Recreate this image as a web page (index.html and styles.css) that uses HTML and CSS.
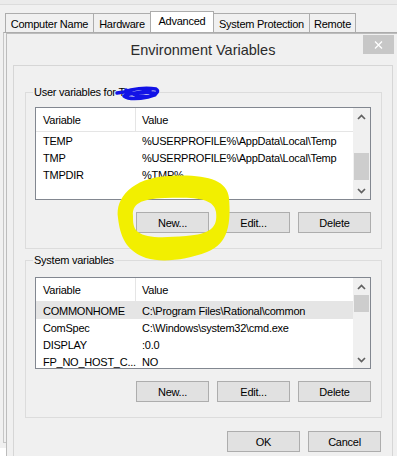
FILE: index.html
```html
<!DOCTYPE html>
<html lang="en">
<head>
    <meta charset="UTF-8">
    <meta name="viewport" content="width=device-width, initial-scale=1.0">
    <title>Environment Variables</title>
    <link rel="stylesheet" href="styles.css">
</head>
<body>

    <!-- System Properties window behind the dialog -->
    <div class="sysprops">
        <div class="caption-strip"></div>
        <div class="tabs">
            <div class="tab tab-name">Computer Name</div>
            <div class="tab tab-hardware">Hardware</div>
            <div class="tab tab-advanced active">Advanced</div>
            <div class="tab tab-protection">System Protection</div>
            <div class="tab tab-remote">Remote</div>
        </div>
        <div class="tab-panel"></div>
    </div>

    <div class="dialog">
        <div class="titlebar">
            <div class="title">Environment Variables</div>
            <div class="close">
                <svg width="9" height="8" viewBox="0 0 9 8">
                    <path d="M1 0.5 L8 7.5 M8 0.5 L1 7.5" stroke="#fff" stroke-width="1.3" fill="none"/>
                </svg>
            </div>
        </div>

        <div class="client">
            <fieldset class="group">
                <legend>User variables for <span class="who">T</span></legend>
                <div class="list">
                    <div class="list-body">
                        <div class="list-head"><span>Variable</span><span>Value</span></div>
                        <div class="row"><span>TEMP</span><span>%USERPROFILE%\AppData\Local\Temp</span></div>
                        <div class="row"><span>TMP</span><span>%USERPROFILE%\AppData\Local\Temp</span></div>
                        <div class="row"><span>TMPDIR</span><span>%TMP%</span></div>
                    </div>
                    <div class="scrollbar">
                        <div class="sb-btn">
                            <svg width="17" height="17" viewBox="0 0 17 17"><polyline points="5,11 8.5,7.5 12,11" fill="none" stroke="#606060" stroke-width="1.7"/></svg>
                        </div>
                        <div class="sb-track"><div class="thumb thumb-low"></div></div>
                        <div class="sb-btn">
                            <svg width="17" height="17" viewBox="0 0 17 17"><polyline points="5,7 8.5,10.5 12,7" fill="none" stroke="#606060" stroke-width="1.7"/></svg>
                        </div>
                    </div>
                </div>
                <div class="buttons">
                    <button class="btn">New...</button>
                    <button class="btn">Edit...</button>
                    <button class="btn">Delete</button>
                </div>
            </fieldset>

            <fieldset class="group group-system">
                <legend>System variables</legend>
                <div class="list list-system">
                    <div class="list-body">
                        <div class="list-head"><span>Variable</span><span>Value</span></div>
                        <div class="row selected"><span>COMMONHOME</span><span>C:\Program Files\Rational\common</span></div>
                        <div class="row"><span>ComSpec</span><span>C:\Windows\system32\cmd.exe</span></div>
                        <div class="row"><span>DISPLAY</span><span>:0.0</span></div>
                        <div class="row"><span>FP_NO_HOST_C...</span><span>NO</span></div>
                    </div>
                    <div class="scrollbar">
                        <div class="sb-btn">
                            <svg width="17" height="17" viewBox="0 0 17 17"><polyline points="5,11 8.5,7.5 12,11" fill="none" stroke="#606060" stroke-width="1.7"/></svg>
                        </div>
                        <div class="sb-track"><div class="thumb thumb-top"></div></div>
                        <div class="sb-btn">
                            <svg width="17" height="17" viewBox="0 0 17 17"><polyline points="5,7 8.5,10.5 12,7" fill="none" stroke="#606060" stroke-width="1.7"/></svg>
                        </div>
                    </div>
                </div>
                <div class="buttons">
                    <button class="btn">New...</button>
                    <button class="btn">Edit...</button>
                    <button class="btn">Delete</button>
                </div>
            </fieldset>

            <div class="dialog-buttons">
                <button class="btn">OK</button>
                <button class="btn">Cancel</button>
            </div>
        </div>
    </div>

    <!-- hand-drawn marks on top of the screenshot -->
    <svg class="marks" width="397" height="456" viewBox="0 0 397 456">
        <path fill="#f2ef00" fill-rule="evenodd"
              d="M118 218 C115 198 132 178 168 176 C204 174 227 179 229 198 C231 222 229 244 207 252 C186 260 162 263 146 258 C126 251 120 236 118 218 Z
                 M133 216 C132 204 140 199 165 198 C195 197 214 198 216 212 C218 228 210 234 186 236 C161 238 146 238 138 232 C133 228 133 222 133 216 Z"/>
        <path fill="none" stroke="#1212e6" stroke-width="3.5" stroke-linecap="round" stroke-linejoin="round"
              d="M117 93 L124 92 C132 89 145 87 156 89 C160 91 156 95 148 97 C138 99 128 99 124 96 C130 93 145 92 154 93 M126 90 C135 96 145 99 155 95 M128 94 L150 91"/>
    </svg>

</body>
</html>
```

FILE: styles.css
```css
/* General Styles */
body {
    margin: 0;
    width: 397px;
    height: 456px;
    overflow: hidden;
    position: relative;
    background-color: #fff;
    font-family: "Liberation Sans", Arial, sans-serif;
    font-size: 11px;
    letter-spacing: -0.25px;
    color: #000;
}

/* Window behind */
.sysprops {
    height: 448px;
    background-color: #f0f0f0;
}

.caption-strip {
    height: 4px;
    background-color: #ebebeb;
    border-bottom: 1px solid #dcdcdc;
}

.tabs {
    display: flex;
    align-items: flex-end;
    height: 21px;
    margin-top: 6px;
    padding-left: 5px;
}

.tab {
    box-sizing: border-box;
    height: 19px;
    line-height: 19px;
    padding-top: 1px;
    border: 1px solid #acacac;
    border-bottom: 0;
    margin-left: -1px;
    text-align: center;
    background-color: #f0f0f0;
    white-space: nowrap;
}

.tab.active {
    height: 21px;
    line-height: 17px;
    background-color: #fff;
    position: relative;
    z-index: 1;
}

.tab-name { width: 89px; margin-left: 0; }
.tab-hardware { width: 58px; }
.tab-advanced { width: 64px; }
.tab-protection { width: 97px; }
.tab-remote { width: 47px; }

.tab-panel {
    margin-left: 3px;
    height: 409px;
    border-left: 1px solid #c6c6c6;
    border-top: 1px solid #acacac;
    border-bottom: 1px solid #c6c6c6;
}

/* Dialog */
.dialog {
    position: absolute;
    left: 6px;
    top: 33px;
    width: 394px;
    height: 430px;
    box-sizing: border-box;
    border: 1px solid #bcbcbc;
    background-color: #f0f0f0;
    padding: 0 6px;
    overflow: hidden;
}

.titlebar {
    height: 31px;
    display: grid;
    grid-template-columns: 1fr auto 1fr;
    align-items: center;
}

.title {
    grid-column: 2;
    font-size: 14.5px;
    letter-spacing: 0;
    color: #2b2b2b;
}

.close {
    grid-column: 3;
    justify-self: end;
    align-self: start;
    margin-top: 1px;
    margin-right: -1px;
    width: 31px;
    height: 19px;
    background-color: #c7c7c7;
    display: flex;
    align-items: center;
    justify-content: center;
}

.client {
    border: 1px solid #d6d6d6;
    padding: 19px 10px 0 11px;
    height: 420px;
}

.group {
    margin: 0;
    padding: 8px 10px 15px 9px;
    border: 1px solid #dcdcdc;
    min-width: 0;
}

.group-system {
    margin-top: 4px;
    padding-top: 10px;
}

.group legend {
    padding: 0 1px;
    margin-left: -2px;
    line-height: 14px;
}

.who {
    display: inline-block;
    width: 36px;
}

/* List view */
.list {
    height: 93px;
    box-sizing: border-box;
    border: 1px solid #828790;
    background-color: #fff;
    display: flex;
}

.list-system {
    height: 92px;
}

.list-body {
    flex: 1;
    min-width: 0;
    overflow: hidden;
}

.list-head,
.row {
    display: grid;
    grid-template-columns: 100px 1fr;
    white-space: nowrap;
}

.list-head {
    height: 24px;
    box-sizing: border-box;
    line-height: 24px;
    border-bottom: 1px solid #e5e5e5;
}

.list-head span:first-child {
    border-right: 1px solid #e5e5e5;
}

.list-head span,
.row span {
    overflow: hidden;
    padding-left: 6px;
}

.list-head span:first-child,
.row span:first-child {
    padding-left: 7px;
}

.row {
    height: 17px;
    line-height: 18px;
}

.row.selected {
    background-color: #e5e5e5;
}

.scrollbar {
    width: 17px;
    background-color: #f0f0f0;
    display: flex;
    flex-direction: column;
}

.sb-btn {
    height: 17px;
}

.sb-btn svg {
    display: block;
}

.sb-track {
    flex: 1;
    padding: 0 1px;
}

.thumb {
    background-color: #cdcdcd;
}

.thumb-low {
    height: 27px;
    margin-top: 28px;
}

.thumb-top {
    height: 17px;
}

/* Buttons */
.buttons,
.dialog-buttons {
    display: flex;
    justify-content: flex-end;
    gap: 8px;
    margin-top: 12px;
}

.dialog-buttons {
    margin-top: 13px;
    padding-right: 1px;
}

.btn {
    width: 73px;
    height: 21px;
    box-sizing: border-box;
    padding: 0;
    border: 1px solid #adadad;
    background-color: #e1e1e1;
    font-family: inherit;
    font-size: 11px;
    letter-spacing: -0.25px;
    color: #000;
}

.marks {
    position: absolute;
    left: 0;
    top: 0;
    pointer-events: none;
}
```
